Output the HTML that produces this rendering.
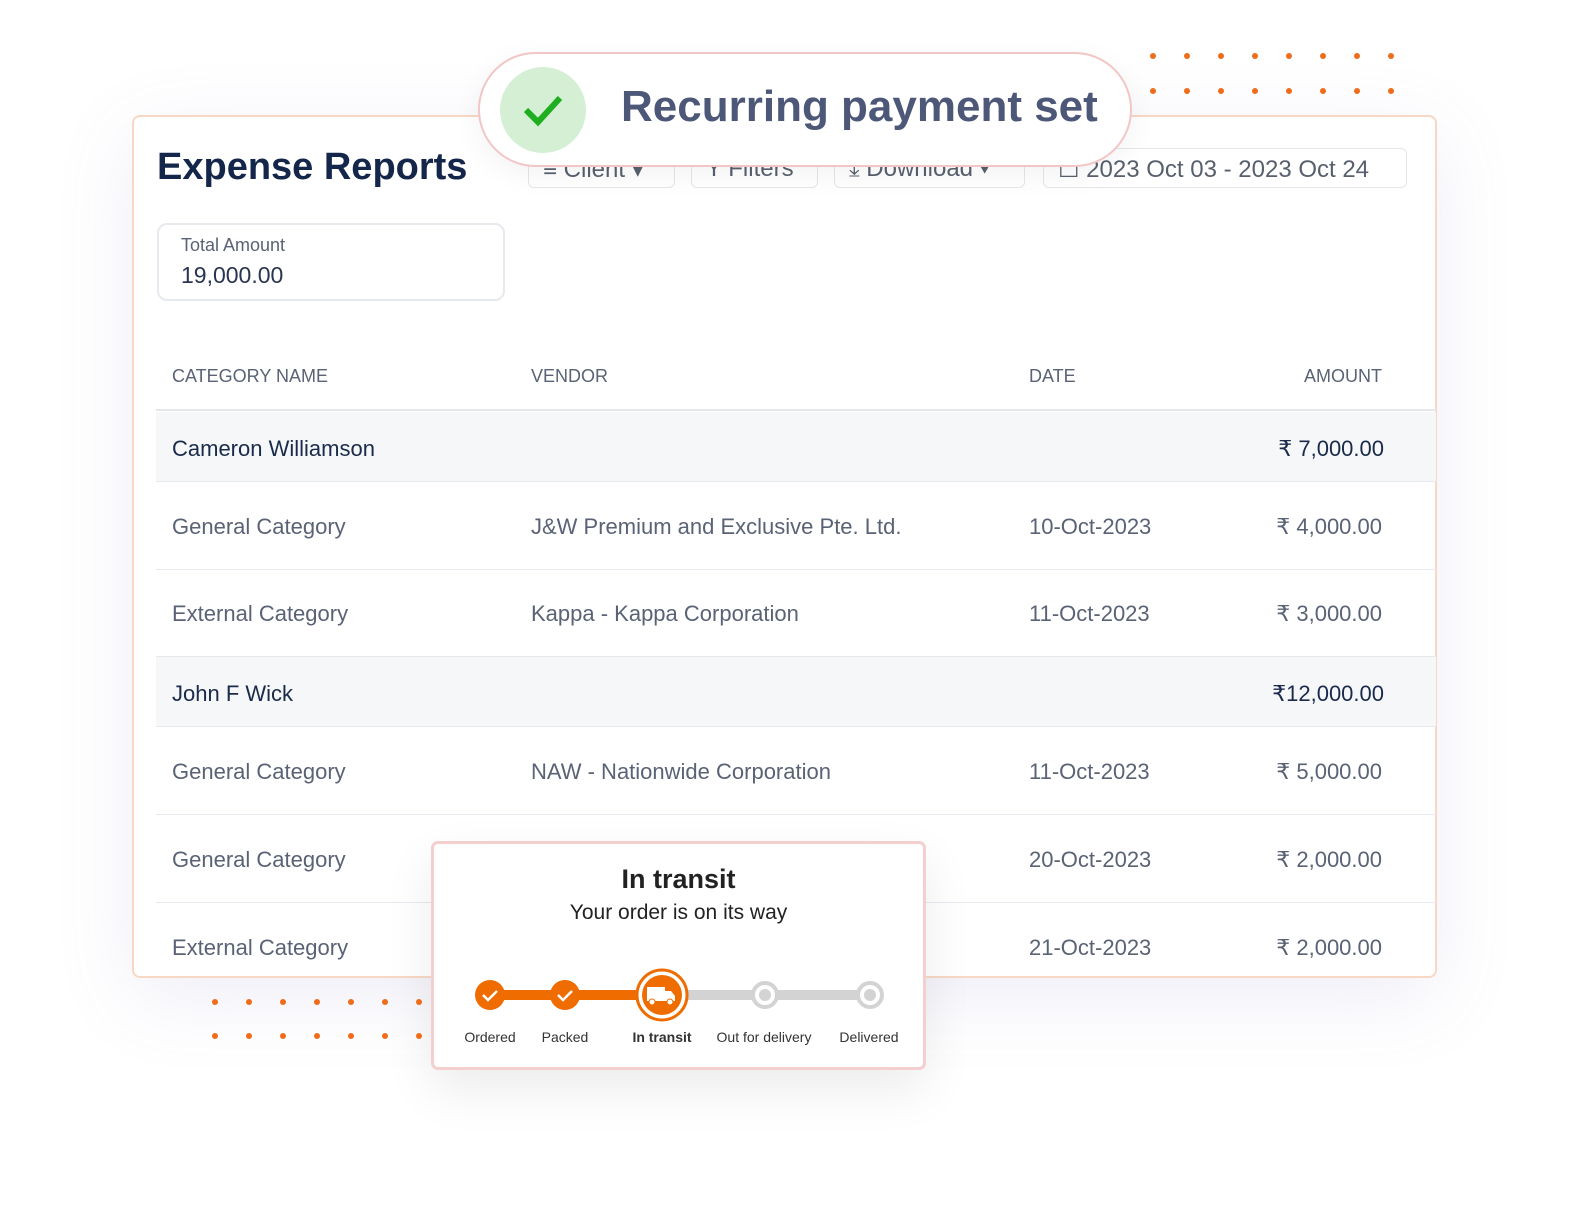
<!DOCTYPE html>
<html><head><meta charset="utf-8"><style>
*{box-sizing:border-box;margin:0;padding:0}
body{width:1582px;height:1216px;background:#fff;position:relative;overflow:hidden;font-family:"Liberation Sans",sans-serif}
.abs{position:absolute}
.card{left:132px;top:115px;width:1305px;height:863px;border:2px solid #f8d8c4;border-radius:8px;background:#fff;box-shadow:0 20px 80px rgba(120,110,180,.12);overflow:hidden}
.dot{position:absolute;width:6px;height:6px;border-radius:50%;background:#ef6c1a}
.btn{position:absolute;top:148px;height:40px;border:1px solid #e3e6ea;border-radius:6px;color:#58606e;font-size:24px;padding:6px 14px;white-space:nowrap;overflow:hidden}
.row{position:absolute;left:156px;width:1280px;border-bottom:1px solid #e6e9ed;font-size:22px;color:#5a6275}
.row span{position:absolute}
.g{background:#f5f7f9;color:#1a2a4a}
</style></head><body>
<div class="abs card"></div>
<div class="abs" style="left:157px;top:146px;font-size:38px;font-weight:bold;color:#14264a">Expense Reports</div>
<div class="btn" style="left:528px;width:147px">≡ Client ▾</div>
<div class="btn" style="left:691px;width:127px">Y Filters</div>
<div class="btn" style="left:834px;width:191px">⤓ Download ▾</div>
<div class="btn" style="left:1043px;width:364px">☐ 2023 Oct 03 - 2023 Oct 24</div>
<div class="abs" style="left:157px;top:223px;width:348px;height:78px;border:2px solid #e6e9ed;border-radius:10px;padding:10px 22px">
<div style="font-size:18px;color:#5a6275">Total Amount</div><div style="font-size:23px;color:#2a3550;margin-top:6px">19,000.00</div></div>
<div class="row" style="top:340px;height:71px;font-size:18px;color:#5a6275;border-bottom:2px solid #e3e6ea"><span style="left:16px;top:26px">CATEGORY NAME</span><span style="left:375px;top:26px">VENDOR</span><span style="left:873px;top:26px">DATE</span><span style="right:54px;top:26px">AMOUNT</span></div>
<div class="row g" style="top:412px;height:70px"><span style="left:16px;top:24px">Cameron Williamson</span><span style="right:52px;top:24px">₹ 7,000.00</span></div>
<div class="row" style="top:482px;height:88px"><span style="left:16px;top:32px">General Category</span><span style="left:375px;top:32px">J&amp;W Premium and Exclusive Pte. Ltd.</span><span style="left:873px;top:32px">10-Oct-2023</span><span style="right:54px;top:32px">₹ 4,000.00</span></div>
<div class="row" style="top:570px;height:87px"><span style="left:16px;top:31px">External Category</span><span style="left:375px;top:31px">Kappa - Kappa Corporation</span><span style="left:873px;top:31px">11-Oct-2023</span><span style="right:54px;top:31px">₹ 3,000.00</span></div>
<div class="row g" style="top:657px;height:70px"><span style="left:16px;top:24px">John F Wick</span><span style="right:52px;top:24px">₹12,000.00</span></div>
<div class="row" style="top:727px;height:88px"><span style="left:16px;top:32px">General Category</span><span style="left:375px;top:32px">NAW - Nationwide Corporation</span><span style="left:873px;top:32px">11-Oct-2023</span><span style="right:54px;top:32px">₹ 5,000.00</span></div>
<div class="row" style="top:815px;height:88px"><span style="left:16px;top:32px">General Category</span><span style="left:873px;top:32px">20-Oct-2023</span><span style="right:54px;top:32px">₹ 2,000.00</span></div>
<div class="row" style="top:903px;height:72px;border:none"><span style="left:16px;top:32px">External Category</span><span style="left:873px;top:32px">21-Oct-2023</span><span style="right:54px;top:32px">₹ 2,000.00</span></div>
<!-- toast -->
<div class="abs" style="left:478px;top:52px;width:654px;height:115px;border:2px solid #f2c6c6;border-radius:58px;background:#fff;box-shadow:0 8px 30px rgba(0,0,0,.05)">
<div class="abs" style="left:20px;top:13px;width:86px;height:86px;border-radius:50%;background:#d4efd3"></div>
<svg class="abs" style="left:40px;top:33px" width="46" height="46" viewBox="0 0 46 46"><path d="M6 23 L18 35 L40 11" fill="none" stroke="#1fae1f" stroke-width="6"/></svg>
<div class="abs" style="left:141px;top:28px;font-size:44px;font-weight:bold;color:#4d5878;white-space:nowrap">Recurring payment set</div></div>
<!-- transit -->
<div class="abs" style="left:431px;top:841px;width:495px;height:229px;border:3px solid #f3cfcf;border-radius:7px;background:#fff;box-shadow:0 20px 50px rgba(0,0,0,.08);text-align:center;color:#222">
<div style="font-size:27px;font-weight:bold;margin-top:20px">In transit</div>
<div style="font-size:21px;margin-top:6px">Your order is on its way</div>
<div class="abs" style="left:55px;top:146px;width:175px;height:10px;background:#ef6c00"></div>
<div class="abs" style="left:230px;top:146px;width:206px;height:10px;background:#d3d3d3"></div>
<svg class="abs" style="left:0;top:0" width="490" height="226">
<circle cx="56" cy="151" r="15" fill="#ef6c00"/><path d="M49 151l5 5 9-9" stroke="#fff" stroke-width="2.5" fill="none"/>
<circle cx="131" cy="151" r="15" fill="#ef6c00"/><path d="M124 151l5 5 9-9" stroke="#fff" stroke-width="2.5" fill="none"/>
<circle cx="228" cy="151" r="25" fill="#fff" stroke="#ef6c00" stroke-width="3"/><circle cx="228" cy="151" r="20" fill="#ef6c00"/>
<path d="M213 143h18v14h-18zM231 147h6l4 5v5h-10z" fill="#fff"/><circle cx="218" cy="158" r="3" fill="#fff" stroke="#ef6c00"/><circle cx="236" cy="158" r="3" fill="#fff" stroke="#ef6c00"/>
<circle cx="331" cy="151" r="12" fill="#fff" stroke="#d3d3d3" stroke-width="4"/><circle cx="331" cy="151" r="6" fill="#d3d3d3"/>
<circle cx="436" cy="151" r="12" fill="#fff" stroke="#d3d3d3" stroke-width="4"/><circle cx="436" cy="151" r="6" fill="#d3d3d3"/>
<g font-size="14" fill="#333" text-anchor="middle" font-family="Liberation Sans"><text x="56" y="198">Ordered</text><text x="131" y="198">Packed</text><text x="228" y="198" font-weight="bold">In transit</text><text x="330" y="198">Out for delivery</text><text x="435" y="198">Delivered</text></g>
</svg></div>
<div id="d"></div>
<script>
var h='';for(var r=0;r<2;r++){for(var i=0;i<8;i++)h+='<div class="dot" style="left:'+(1150+i*34)+'px;top:'+(53+r*35)+'px"></div>';for(var i=0;i<7;i++)h+='<div class="dot" style="left:'+(212+i*34)+'px;top:'+(999+r*34)+'px"></div>';}
document.getElementById('d').innerHTML=h;
</script>
</body></html>
